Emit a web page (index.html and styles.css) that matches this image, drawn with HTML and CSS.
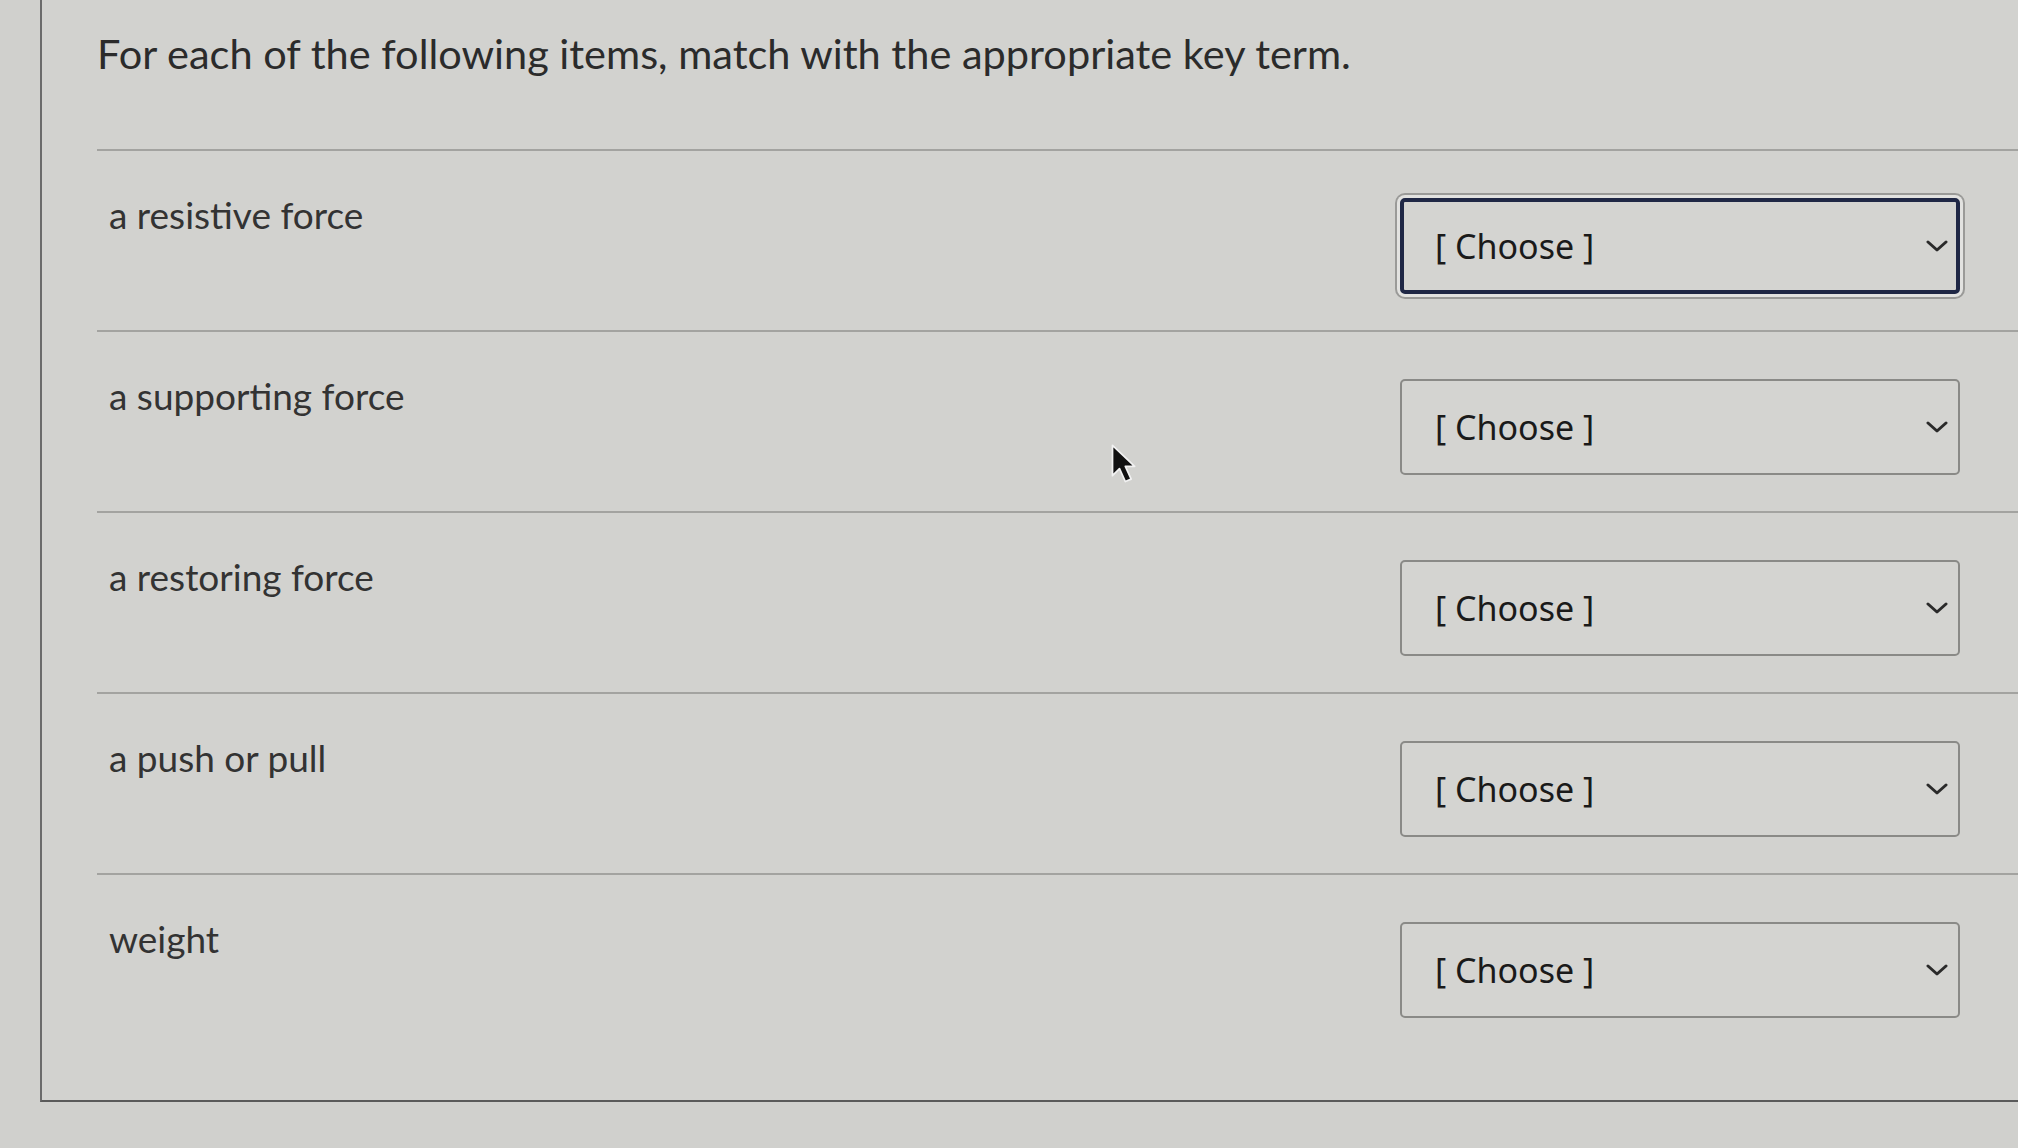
FILE: index.html
```html
<!DOCTYPE html>
<html lang="en">
<head>
    <meta charset="UTF-8">
    <meta name="viewport" content="width=device-width, initial-scale=1.0">
    <title>Quiz - Matching</title>
    <link rel="stylesheet" href="styles.css">
</head>
<body>

<div class="question-panel">
    <p class="question-text">For each of the following items, match with the appropriate key term.</p>

    <div class="answers">
        <div class="match-row">
            <label class="match-label" for="answer-1">a resistive force</label>
            <div class="select-wrap">
                <select id="answer-1" class="match-select is-focused">
                    <option>[ Choose ]</option>
                </select>
                <svg class="chevron" viewBox="0 0 22 12" aria-hidden="true"><path d="M2 2 L11 10 L20 2"/></svg>
            </div>
        </div>
        <div class="match-row">
            <label class="match-label" for="answer-2">a supporting force</label>
            <div class="select-wrap">
                <select id="answer-2" class="match-select">
                    <option>[ Choose ]</option>
                </select>
                <svg class="chevron" viewBox="0 0 22 12" aria-hidden="true"><path d="M2 2 L11 10 L20 2"/></svg>
            </div>
        </div>
        <div class="match-row">
            <label class="match-label" for="answer-3">a restoring force</label>
            <div class="select-wrap">
                <select id="answer-3" class="match-select">
                    <option>[ Choose ]</option>
                </select>
                <svg class="chevron" viewBox="0 0 22 12" aria-hidden="true"><path d="M2 2 L11 10 L20 2"/></svg>
            </div>
        </div>
        <div class="match-row">
            <label class="match-label" for="answer-4">a push or pull</label>
            <div class="select-wrap">
                <select id="answer-4" class="match-select">
                    <option>[ Choose ]</option>
                </select>
                <svg class="chevron" viewBox="0 0 22 12" aria-hidden="true"><path d="M2 2 L11 10 L20 2"/></svg>
            </div>
        </div>
        <div class="match-row">
            <label class="match-label" for="answer-5">weight</label>
            <div class="select-wrap">
                <select id="answer-5" class="match-select">
                    <option>[ Choose ]</option>
                </select>
                <svg class="chevron" viewBox="0 0 22 12" aria-hidden="true"><path d="M2 2 L11 10 L20 2"/></svg>
            </div>
        </div>
    </div>
</div>

<!-- mouse pointer that was on screen -->
<svg class="pointer" viewBox="0 0 22 36" aria-hidden="true">
    <path d="M2 2 L2 28 L8 22 L13 33 L18 31 L13 20 L21 20 Z"/>
</svg>

</body>
</html>
```

FILE: styles.css
```css
body {
    font-family: Lato, "Open Sans", Arial, sans-serif;
    margin: 0;
    padding: 0;
    background-color: #d0d0cd;
    color: #333;
    position: relative;
    min-height: 1148px;
}
.question-panel {
    margin-left: 40px;
    padding: 26px 0 46px 55px;
    background-color: #d2d2cf;
    border-left: 2px solid #6b6b6b;
    border-bottom: 2px solid #5a5a5a;
}
.question-text {
    margin: 0 0 69px 0;
    font-size: 41.5px;
    line-height: 54px;
    color: #2b2b2b;
}
.match-row {
    display: flex;
    justify-content: space-between;
    align-items: flex-start;
    border-top: 2px solid #a3a3a0;
    height: 179px;
}
.match-label {
    padding: 40px 0 0 12px;
    font-size: 37px;
    line-height: 48px;
    color: #333;
}
.select-wrap {
    position: relative;
    width: 560px;
    height: 96px;
    margin: 47px 58px 0 0;
}
.match-select {
    appearance: none;
    -webkit-appearance: none;
    box-sizing: border-box;
    width: 100%;
    height: 100%;
    margin: 0;
    padding: 0 60px 0 33px;
    font-family: "Noto Sans", "Open Sans", sans-serif;
    font-size: 34px;
    color: #1a1a1a;
    background-color: #d4d4d1;
    border: 2px solid #8a8a87;
    border-radius: 5px;
}
.match-select.is-focused {
    border: 4px solid #1f2745;
    padding-left: 31px;
    box-shadow: 0 0 0 3px #e2e2e0, 0 0 0 5px #9a9a98;
}
.chevron {
    position: absolute;
    right: 12px;
    top: 42px;
    width: 22px;
    height: 12px;
    fill: none;
    stroke: #2a2a2a;
    stroke-width: 3;
    stroke-linecap: round;
    stroke-linejoin: round;
    pointer-events: none;
}
.pointer {
    position: absolute;
    left: 1110px;
    top: 443px;
    width: 26px;
    height: 42px;
    fill: #111;
    stroke: #f2f2f2;
    stroke-width: 1.5;
    stroke-linejoin: round;
}
```
